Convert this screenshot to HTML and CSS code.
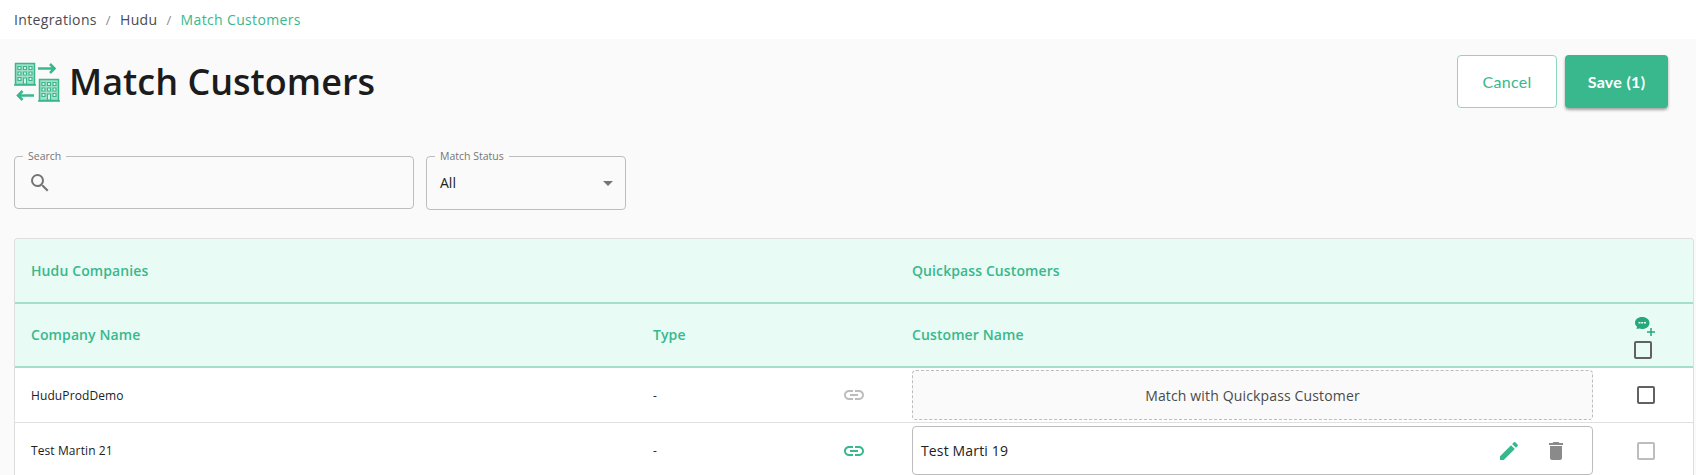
FILE: index.html
```html
<!DOCTYPE html>
<html lang="en-us">
<head>
  <meta charset="utf-8">
  <title>Match Customers</title>
  <link rel="stylesheet" href="styles.css">
</head>
<body>

  <div class="breadcrumbs">
    <span>Integrations</span>
    <span class="sep">/</span>
    <span>Hudu</span>
    <span class="sep">/</span>
    <span class="current">Match Customers</span>
  </div>

  <div class="page">
    <div class="title-row">
      <svg class="title-icon" width="46" height="40" viewBox="0 0 46 40">
        <g fill="#a5dec9" stroke="#38b88c" stroke-width="1.500">
          <rect x="1.500" y="1.500" width="19" height="21"/>
          <rect x="25.500" y="17.500" width="19" height="21"/>
        </g>
        <g fill="#e9fbf5" stroke="#38b88c" stroke-width="1.200">
          <path d="M4 4.500h3v3h-3zM9.500 4.500h3v3h-3zM15 4.500h3v3h-3zM4 10h3v3h-3zM9.500 10h3v3h-3zM15 10h3v3h-3zM4 15.500h3v3h-3zM15 15.500h3v3h-3zM9.500 16h3v6h-3z"/>
          <path d="M28 20.500h3v3h-3zM33.500 20.500h3v3h-3zM39 20.500h3v3h-3zM28 26h3v3h-3zM33.500 26h3v3h-3zM39 26h3v3h-3zM28 31.500h3v3h-3zM39 31.500h3v3h-3zM33.500 32h3v6h-3z"/>
        </g>
        <path d="M0 23h22M24 39h22" stroke="#38b88c" stroke-width="1.500"/>
        <g fill="none" stroke="#38b88c" stroke-width="2.500">
          <path d="M24 6.500h16M36 2l4.500 4.500-4.500 4.500"/>
          <path d="M20 33.500h-16M8.500 29l-4.500 4.500 4.500 4.500"/>
        </g>
      </svg>
      <h1>Match Customers</h1>
      <div class="actions">
        <button class="btn btn-cancel">Cancel</button>
        <button class="btn btn-save">Save (1)</button>
      </div>
    </div>

    <div class="filters">
      <div class="field field-search">
        <span class="field-label">Search</span>
        <svg width="24" height="24" viewBox="0 0 24 24"><path fill="#757575" d="M15.500 14h-.79l-.28-.27A6.470 6.470 0 0 0 16 9.500 6.500 6.500 0 1 0 9.500 16c1.610 0 3.090-.59 4.230-1.570l.27.28v.79l5 4.990L20.490 19l-4.990-5zm-6 0C7.010 14 5 11.990 5 9.500S7.010 5 9.500 5 14 7.010 14 9.500 11.990 14 9.500 14z"/></svg>
      </div>
      <div class="field field-select">
        <span class="field-label">Match Status</span>
        <span class="select-value">All</span>
        <span class="caret"></span>
      </div>
    </div>

    <div class="table">
      <div class="row head-row">
        <div class="cell span-2">Hudu Companies</div>
        <div class="cell span-2">Quickpass Customers</div>
      </div>
      <div class="row head-row head-cols">
        <div class="cell">Company Name</div>
        <div class="cell">Type</div>
        <div class="cell">Customer Name</div>
        <div class="cell head-check">
          <svg class="note-icon" width="22" height="24" viewBox="0 0 22 24">
            <path fill="#27a77c" d="M8 1c4.400 0 7.500 2.500 7.500 6 0 3.400-3.100 6-7.500 6-1 0-2-.1-2.900-.4L2.500 13l.5-2.400C1.500 9.500 1 8.300 1 7c0-3.500 2.900-6 7-6z"/>
            <path fill="#e9fbf5" d="M4.500 6h2v1.500h-2zM7.200 6h2v1.500h-2zM10 6h2v1.500h-2z"/>
            <path stroke="#27a77c" stroke-width="1.500" d="M17 12v8M13 16h8"/>
          </svg>
          <span class="checkbox"></span>
        </div>
      </div>
      <div class="row body-row">
        <div class="cell name">HuduProdDemo</div>
        <div class="cell type">
          <span>-</span>
          <svg class="link-icon" width="24" height="24" viewBox="0 0 24 24"><path fill="#bdbdbd" d="M3.900 12c0-1.710 1.390-3.100 3.100-3.100h4V7H7c-2.760 0-5 2.240-5 5s2.240 5 5 5h4v-1.900H7c-1.710 0-3.100-1.390-3.100-3.100zM8 13h8v-2H8v2zm9-6h-4v1.900h4c1.710 0 3.100 1.390 3.100 3.100s-1.390 3.100-3.100 3.100h-4V17h4c2.760 0 5-2.240 5-5s-2.240-5-5-5z"/></svg>
        </div>
        <div class="cell box-cell">
          <div class="match-box">Match with Quickpass Customer</div>
        </div>
        <div class="cell check-cell"><span class="checkbox"></span></div>
      </div>
      <div class="row body-row last">
        <div class="cell name">Test Martin 21</div>
        <div class="cell type">
          <span>-</span>
          <svg class="link-icon" width="24" height="24" viewBox="0 0 24 24"><path fill="#38b88c" d="M3.900 12c0-1.710 1.390-3.100 3.100-3.100h4V7H7c-2.760 0-5 2.240-5 5s2.240 5 5 5h4v-1.900H7c-1.710 0-3.100-1.390-3.100-3.100zM8 13h8v-2H8v2zm9-6h-4v1.900h4c1.710 0 3.100 1.390 3.100 3.100s-1.390 3.100-3.100 3.100h-4V17h4c2.760 0 5-2.240 5-5s-2.240-5-5-5z"/></svg>
        </div>
        <div class="cell box-cell">
          <div class="customer-box">
            <span class="customer-name">Test Marti 19</span>
            <svg width="24" height="24" viewBox="0 0 24 24"><path fill="#38b88c" d="M3 17.250V21h3.750L17.810 9.940l-3.750-3.750L3 17.250zM20.710 7.040a1 1 0 0 0 0-1.410l-2.340-2.340a1 1 0 0 0-1.410 0l-1.830 1.830 3.750 3.750 1.830-1.830z"/></svg>
            <svg class="trash" width="24" height="24" viewBox="0 0 24 24"><path fill="#8a8a8a" d="M6 19c0 1.100.9 2 2 2h8c1.100 0 2-.9 2-2V7H6v12zM19 4h-3.500l-1-1h-5l-1 1H5v2h14V4z"/></svg>
          </div>
        </div>
        <div class="cell check-cell"><span class="checkbox disabled"></span></div>
      </div>
    </div>
  </div>

</body>
</html>
```

FILE: styles.css
```css
* {
  box-sizing: border-box;
}
html, body {
  height: 475px;
  overflow: hidden;
}
body {
  margin: 0;
  background-color: #fafafa;
  font-family: "Open Sans", sans-serif;
  color: #212121;
}
.breadcrumbs {
  height: 39px;
  padding: 0 14px;
  background-color: white;
  display: flex;
  align-items: center;
  gap: 9px;
  font-size: 14px;
  font-weight: 500;
  letter-spacing: 0.35px;
  color: #4a4a55;
}
.breadcrumbs .sep {
  font-weight: 400;
  color: #8a8a8a;
  font-size: 13px;
}
.breadcrumbs .current {
  color: #38b88c;
}
.page {
  padding: 0 2px 0 14px;
}
.title-row {
  display: flex;
  align-items: center;
  height: 77px;
  padding-top: 8px;
}
h1 {
  margin: 0 0 0 9px;
  font-size: 36px;
  font-weight: 600;
  color: #1c1c1c;
}
.actions {
  margin-left: auto;
  margin-right: 26px;
  display: flex;
  gap: 8px;
}
.btn {
  height: 53px;
  border-radius: 4px;
  font-family: "Lato", sans-serif;
  font-size: 16px;
  font-weight: 700;
  letter-spacing: 0.3px;
}
.btn-cancel {
  width: 100px;
  background-color: white;
  border: 1px solid #8fd6bd;
  color: #38b88c;
  font-weight: 400;
}
.btn-save {
  width: 103px;
  background-color: #38b88c;
  border: none;
  color: white;
  box-shadow: 0 2px 3px rgba(0, 0, 0, 0.35);
}
.filters {
  margin-top: 40px;
  display: flex;
  gap: 12px;
  align-items: flex-start;
}
.field {
  position: relative;
  height: 53px;
  border: 1px solid #bdbdbd;
  border-radius: 4px;
  display: flex;
  align-items: center;
}
.field-label {
  position: absolute;
  top: -7px;
  left: 8px;
  padding: 0 5px;
  background-color: #fafafa;
  font-size: 10.500px;
  line-height: 13px;
  color: #757575;
}
.field-search {
  width: 400px;
  padding-left: 13px;
}
.field-select {
  width: 200px;
  height: 54px;
  padding: 0 12px 2px 13px;
  justify-content: space-between;
  font-size: 14px;
}
.caret {
  width: 0;
  height: 0;
  margin-top: 2px;
  border-left: 5px solid transparent;
  border-right: 5px solid transparent;
  border-top: 5px solid #757575;
}
.table {
  margin-top: 28px;
  border: 1px solid #dedede;
  border-bottom: none;
  border-radius: 4px 4px 0 0;
  background-color: white;
  height: 240px;
}
.row {
  display: grid;
  grid-template-columns: 622px 259px 713px 84px;
}
.head-row {
  height: 65px;
  background-color: #e9fbf5;
  border-bottom: 2px solid #a5dec9;
  color: #38b88c;
  font-size: 14px;
  font-weight: 600;
  letter-spacing: 0.1px;
  border-radius: 4px 4px 0 0;
}
.head-cols {
  height: 64px;
  border-radius: 0;
}
.span-2 {
  grid-column: span 2;
}
.cell {
  padding: 0 16px;
  display: flex;
  align-items: center;
}
.head-row .cell {
  padding-bottom: 1px;
}
.head-row .head-check {
  padding: 0 0 0 25px;
  flex-direction: column;
  align-items: flex-start;
  justify-content: flex-start;
}
.note-icon {
  display: block;
  margin: 12px 0 1px;
}
.checkbox {
  display: block;
  width: 18px;
  height: 18px;
  border: 2px solid #616161;
  border-radius: 2px;
}
.checkbox.disabled {
  border-color: #bdbdbd;
}
.body-row {
  height: 55px;
  border-bottom: 1px solid #e0e0e0;
  font-size: 12px;
  letter-spacing: 0.1px;
}
.body-row.last {
  border-bottom: none;
}
.type {
  justify-content: space-between;
  padding-right: 30px;
}
.box-cell {
  align-items: flex-start;
  font-size: 14px;
  letter-spacing: 0.15px;
}
.match-box {
  width: 100%;
  height: 50px;
  margin-top: 2px;
  border: 1px dashed #bdbdbd;
  border-radius: 4px;
  background-color: #fafafa;
  color: #4a4a4a;
  display: flex;
  align-items: center;
  justify-content: center;
}
.customer-box {
  width: 100%;
  height: 49px;
  margin-top: 3px;
  border: 1px solid #bdbdbd;
  border-radius: 4px;
  display: flex;
  align-items: center;
  padding: 0 24px 0 8px;
}
.customer-name {
  flex: 1;
}
.trash {
  margin-left: 23px;
}
.check-cell {
  padding: 0 0 0 28px;
}
```
